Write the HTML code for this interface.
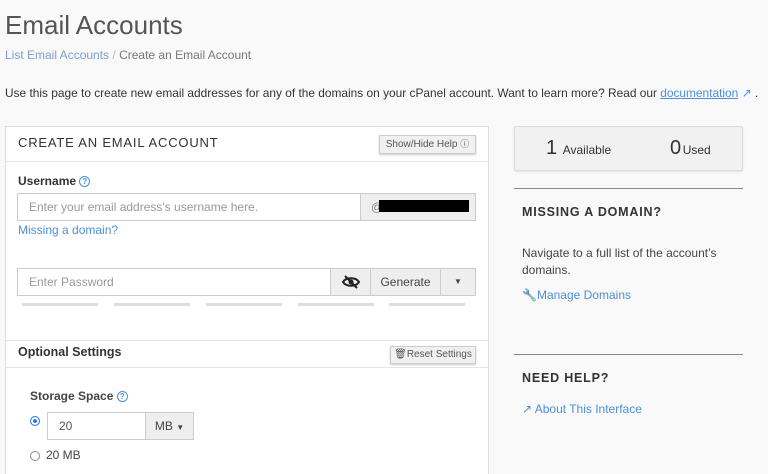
<!DOCTYPE html>
<html><head><style>
*{box-sizing:border-box;margin:0;padding:0}
html,body{width:768px;height:474px;overflow:hidden}
body{background:#f9f9f9;font-family:"Liberation Sans",sans-serif;color:#333;position:relative}
.a{position:absolute;white-space:nowrap}
a,.lnk{color:#4a90d9;text-decoration:none}
.q{display:inline-block;width:11px;height:11px;border:1.2px solid #4a90d9;border-radius:50%;font-size:8px;line-height:9px;text-align:center;color:#4a90d9;vertical-align:1px}
.btn{position:absolute;background:#f0f0f0;border:1px solid #ccc;box-shadow:0 1px 2px rgba(0,0,0,.2);font-size:10px;color:#555;text-align:center;line-height:16px}
.inp{position:absolute;background:#fff;border:1px solid #ccc;font-size:12px;color:#999;padding-left:11px}
.add{position:absolute;background:#eee;border:1px solid #ccc;font-size:12px;color:#444;text-align:center}
.bar{position:absolute;top:303px;height:3px;background:#ddd;width:76px}
</style></head><body>
<div class="a" style="left:5px;top:10px;font-size:26px;color:#555">Email Accounts</div>
<div class="a" style="left:5px;top:48px;font-size:12px;color:#777"><span class="lnk" style="color:#7a9fd0">List Email Accounts</span> <span style="color:#bbb">/</span> Create an Email Account</div>
<div class="a" style="left:5px;top:86px;font-size:11.9px;color:#333">Use this page to create new email addresses for any of the domains on your cPanel account. Want to learn more? Read our <span class="lnk" style="text-decoration:underline">documentation</span> <span class="lnk">&#x2197;</span> .</div>

<div class="a" style="left:5px;top:126px;width:484px;height:360px;background:#fff;border:1px solid #ddd"></div>
<div class="a" style="left:6px;top:161px;width:482px;height:1px;background:#e5e5e5"></div>
<div class="a" style="left:18px;top:135px;font-size:13px;letter-spacing:.8px;color:#333">CREATE AN EMAIL ACCOUNT</div>
<div class="btn" style="left:379px;top:135px;width:97px;height:19px">Show/Hide Help <span style="font-size:9px">&#9432;</span></div>

<div class="a" style="left:18px;top:174px;font-size:12px;font-weight:bold;color:#333">Username <span class="q">?</span></div>
<div class="inp" style="left:17px;top:193px;width:344px;height:28px;line-height:26px">Enter your email address's username here.</div>
<div class="add" style="left:360px;top:193px;width:116px;height:28px;line-height:26px;text-align:left;padding-left:10px;color:#888">@</div>
<div class="a" style="left:379px;top:200px;width:90px;height:12px;background:#000"></div>
<div class="a lnk" style="left:18px;top:223px;font-size:12px">Missing a domain?</div>

<div class="inp" style="left:17px;top:268px;width:314px;height:28px;line-height:26px">Enter Password</div>
<div class="add" style="left:330px;top:268px;width:41px;height:28px;line-height:26px">
<svg width="20" height="14" viewBox="0 0 20 14" style="vertical-align:-3px"><path d="M2 7C5 2 15 2 18 7C15 12 5 12 2 7Z" fill="none" stroke="#222" stroke-width="2"/><circle cx="10" cy="7" r="2.5" fill="#222"/><path d="M4 1L16 13" stroke="#222" stroke-width="2"/></svg></div>
<div class="add" style="left:370px;top:268px;width:71px;height:28px;line-height:26px">Generate</div>
<div class="add" style="left:440px;top:268px;width:36px;height:28px;line-height:26px;font-size:8px">&#9660;</div>
<div class="bar" style="left:22px"></div><div class="bar" style="left:114px"></div><div class="bar" style="left:206px"></div><div class="bar" style="left:298px"></div><div class="bar" style="left:389px"></div>

<div class="a" style="left:6px;top:340px;width:482px;height:1px;background:#e5e5e5"></div>
<div class="a" style="left:6px;top:367px;width:482px;height:1px;background:#e5e5e5"></div>
<div class="a" style="left:18px;top:345px;font-size:12.5px;font-weight:bold;color:#333">Optional Settings</div>
<div class="btn" style="left:390px;top:346px;width:86px;height:18px">&#128465;Reset Settings</div>

<div class="a" style="left:30px;top:389px;font-size:12px;font-weight:bold;color:#444">Storage Space <span class="q">?</span></div>
<div class="a" style="left:30px;top:416px;width:10px;height:10px;border-radius:50%;border:1px solid #2a7ae2;box-shadow:inset 0 0 0 2px #fff;background:#2a7ae2"></div>
<div class="inp" style="left:47px;top:412px;width:99px;height:28px;line-height:26px;color:#555">20</div>
<div class="add" style="left:145px;top:412px;width:49px;height:28px;line-height:26px">MB <span style="font-size:8px">&#9660;</span></div>
<div class="a" style="left:30px;top:451px;width:10px;height:10px;border-radius:50%;border:1px solid #888;background:#fff"></div>
<div class="a" style="left:46px;top:448px;font-size:12px;color:#444">20 MB</div>

<div class="a" style="left:514px;top:126px;width:229px;height:45px;background:#f1f1f1;border:1px solid #ddd;border-radius:2px;box-shadow:0 1px 2px rgba(0,0,0,.1)"></div>
<div class="a" style="left:546px;top:137px;font-size:20px;color:#333">1 <span style="font-size:12px">Available</span></div>
<div class="a" style="left:670px;top:137px;font-size:20px;color:#333">0 <span style="font-size:12px;margin-left:-4px">Used</span></div>
<div class="a" style="left:514px;top:188px;width:229px;height:1px;background:#888"></div>
<div class="a" style="left:522px;top:205px;font-size:12.5px;font-weight:bold;letter-spacing:.8px;color:#333">MISSING A DOMAIN?</div>
<div class="a" style="left:522px;top:245px;font-size:12px;color:#444;line-height:17px">Navigate to a full list of the account’s<br>domains.</div>
<div class="a lnk" style="left:522px;top:288px;font-size:12px">&#128295;Manage Domains</div>
<div class="a" style="left:514px;top:354px;width:229px;height:1px;background:#888"></div>
<div class="a" style="left:522px;top:371px;font-size:12.5px;font-weight:bold;letter-spacing:.8px;color:#333">NEED HELP?</div>
<div class="a lnk" style="left:522px;top:402px;font-size:12px">&#x2197; About This Interface</div>
</body></html>
